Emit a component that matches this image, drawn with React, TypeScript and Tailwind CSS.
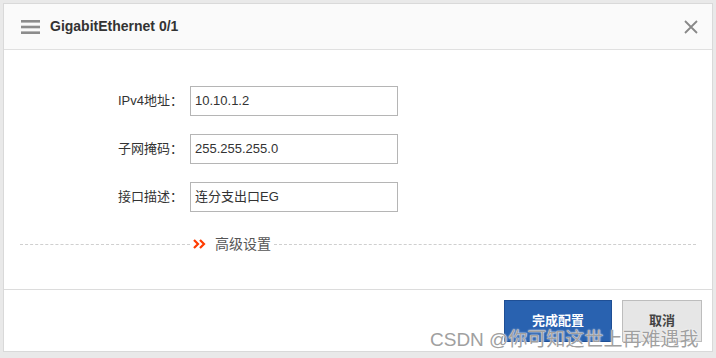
import React from "react";

const font = { fontFamily: '"Liberation Sans", Arial, "Noto Sans CJK SC", sans-serif' };

function Row({ label, value }: { label: string; value: string }) {
  return (
    <div className="flex items-center h-[30px]">
      <div className="w-[186px] text-right text-[13px] text-[#333] pr-[7px]">{label}</div>
      <div className="w-[208px] h-[30px] border border-[#b5b5b5] flex items-center px-[4px] text-[13px] text-[#333]">{value}</div>
    </div>
  );
}

export default function App() {
  return (
    <div className="w-[716px] h-[358px] bg-[#e9e9e9] pt-[3px] pl-[3px] relative" style={font}>
      <div className="w-[710px] h-[349px] bg-white border border-[#d9d9d9] flex flex-col">
        <div className="h-[46px] bg-[#fafafa] border-b border-[#e0e0e0] flex items-center pl-[17px] pr-[13px] shrink-0">
          <svg width="19" height="14" viewBox="0 0 19 14" className="mr-[10px]">
            <rect x="0" y="0" width="19" height="2.6" fill="#8c8c8c" />
            <rect x="0" y="5.7" width="19" height="2.6" fill="#8c8c8c" />
            <rect x="0" y="11.4" width="19" height="2.6" fill="#8c8c8c" />
          </svg>
          <div className="text-[14px] font-bold text-[#333] flex-1">GigabitEthernet 0/1</div>
          <svg width="14" height="14" viewBox="0 0 14 14" className="mr-[1px]">
            <path d="M1 1 L13 13 M13 1 L1 13" stroke="#888" strokeWidth="1.8" />
          </svg>
        </div>
        <div className="flex-1 flex flex-col pt-[36px]">
          <div className="flex flex-col gap-[18px]">
            <Row label="IPv4地址：" value="10.10.1.2" />
            <Row label="子网掩码：" value="255.255.255.0" />
            <Row label="接口描述：" value="连分支出口EG" />
          </div>
          <div className="flex items-center mt-[22px] px-[16px] h-[20px]">
            <div className="w-[170px] border-t border-dashed border-[#cfcfcf]" />
            <div className="flex items-center px-[3px] gap-[9px]">
              <svg width="13" height="10" viewBox="0 0 13 10">
                <path d="M1 1 L5 5 L1 9 M7 1 L11 5 L7 9" stroke="#ff3b00" strokeWidth="2.2" fill="none" />
              </svg>
              <span className="text-[14px] text-[#555]">高级设置</span>
            </div>
            <div className="flex-1 border-t border-dashed border-[#cfcfcf]" />
          </div>
        </div>
        <div className="h-[62px] border-t border-[#dcdcdc] flex items-start justify-end gap-[10px] pt-[10px] pr-[10px] shrink-0">
          <div className="w-[108px] h-[42px] bg-[#2962b0] border border-[#1f4f95] text-white text-[13px] font-bold flex items-center justify-center">完成配置</div>
          <div className="w-[80px] h-[42px] bg-[#e6e6e6] border border-[#bdbdbd] text-[#444] text-[13px] font-bold flex items-center justify-center">取消</div>
        </div>
      </div>
      <div className="absolute left-[430px] top-[330px] text-[19px] text-[#a0a0a0] leading-none pointer-events-none" style={{ textShadow: "0 0 1px #fff, 0 0 2px #fff" }}>CSDN @你可知这世上再难遇我</div>
    </div>
  );
}
